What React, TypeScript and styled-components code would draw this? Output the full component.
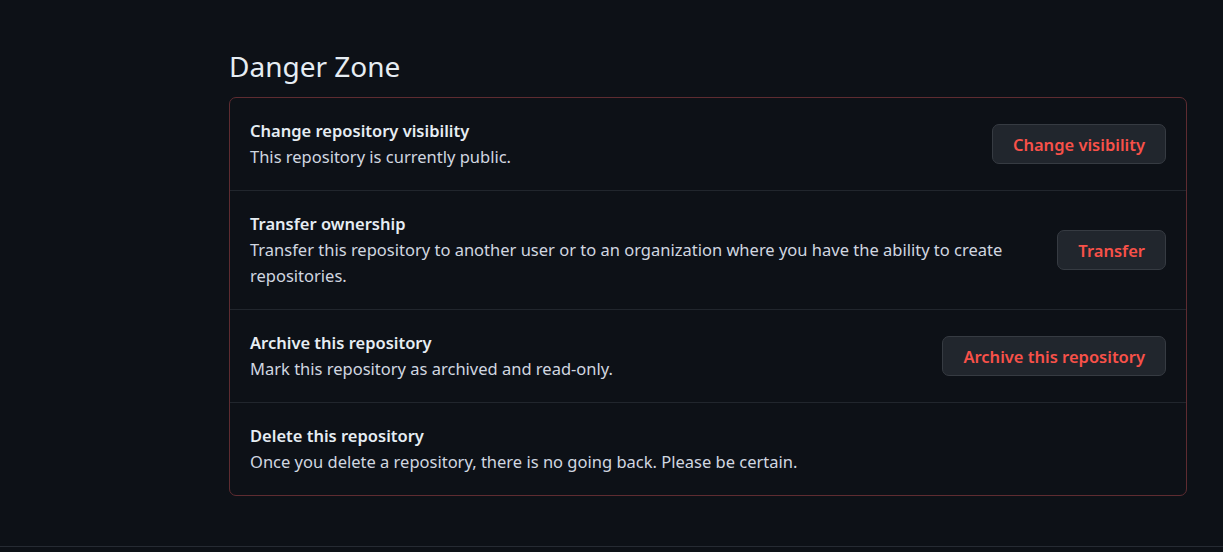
import styled, { createGlobalStyle } from "styled-components";

const GlobalStyle = createGlobalStyle`
  html, body {
    margin: 0;
    padding: 0;
    background: #0d1117;
  }
  body {
    font-family: "Noto Sans", "Liberation Sans", sans-serif;
    color: #e6edf3;
  }
`;

const colors = {
  bg: "#0d1117",
  text: "#e6edf3",
  muted: "#d1d7e0",
  danger: "#f85149",
  dangerBorder: "#5e2c31",
  divider: "#21262d",
  buttonBg: "#21262d",
  buttonBorder: "#363b42",
};

const Page = styled.div`
  min-height: 552px;
  display: flex;
  flex-direction: column;
`;

const Main = styled.main`
  margin-left: 229px;
  width: 958px;
  padding-top: 44px;
  padding-bottom: 50px;
`;

const Heading = styled.h2`
  margin: 0 0 8px;
  font-size: 28px;
  font-weight: 400;
  line-height: 45px;
  color: ${colors.text};
`;

const DangerBox = styled.div`
  border: 1px solid ${colors.dangerBorder};
  border-radius: 7px;
`;

const Row = styled.div`
  display: flex;
  align-items: center;
  gap: 20px;
  padding: 20px;

  & + & {
    border-top: 1px solid ${colors.divider};
  }
`;

const RowText = styled.div`
  flex: 1;
  font-size: 16.5px;
  line-height: 26px;
`;

const RowTitle = styled.div`
  font-weight: 600;
  color: ${colors.text};
`;

const RowDescription = styled.div`
  color: ${colors.muted};
`;

const DangerButton = styled.button`
  flex: none;
  height: 40px;
  padding: 0 20px;
  background: ${colors.buttonBg};
  border: 1px solid ${colors.buttonBorder};
  border-radius: 7px;
  color: ${colors.danger};
  font-family: inherit;
  font-size: 16.5px;
  font-weight: 600;
  cursor: pointer;
`;

const Footer = styled.footer`
  border-top: 1px solid #262b33;
  flex: 1;
`;

type Setting = {
  title: string;
  description: string;
  action?: string;
};

const settings: Setting[] = [
  {
    title: "Change repository visibility",
    description: "This repository is currently public.",
    action: "Change visibility",
  },
  {
    title: "Transfer ownership",
    description:
      "Transfer this repository to another user or to an organization where you have the ability to create repositories.",
    action: "Transfer",
  },
  {
    title: "Archive this repository",
    description: "Mark this repository as archived and read-only.",
    action: "Archive this repository",
  },
  {
    title: "Delete this repository",
    description:
      "Once you delete a repository, there is no going back. Please be certain.",
  },
];

export default function App() {
  return (
    <Page>
      <GlobalStyle />
      <Main>
        <Heading>Danger Zone</Heading>
        <DangerBox>
          {settings.map((s) => (
            <Row key={s.title}>
              <RowText>
                <RowTitle>{s.title}</RowTitle>
                <RowDescription>{s.description}</RowDescription>
              </RowText>
              {s.action && <DangerButton>{s.action}</DangerButton>}
            </Row>
          ))}
        </DangerBox>
      </Main>
      <Footer />
    </Page>
  );
}
